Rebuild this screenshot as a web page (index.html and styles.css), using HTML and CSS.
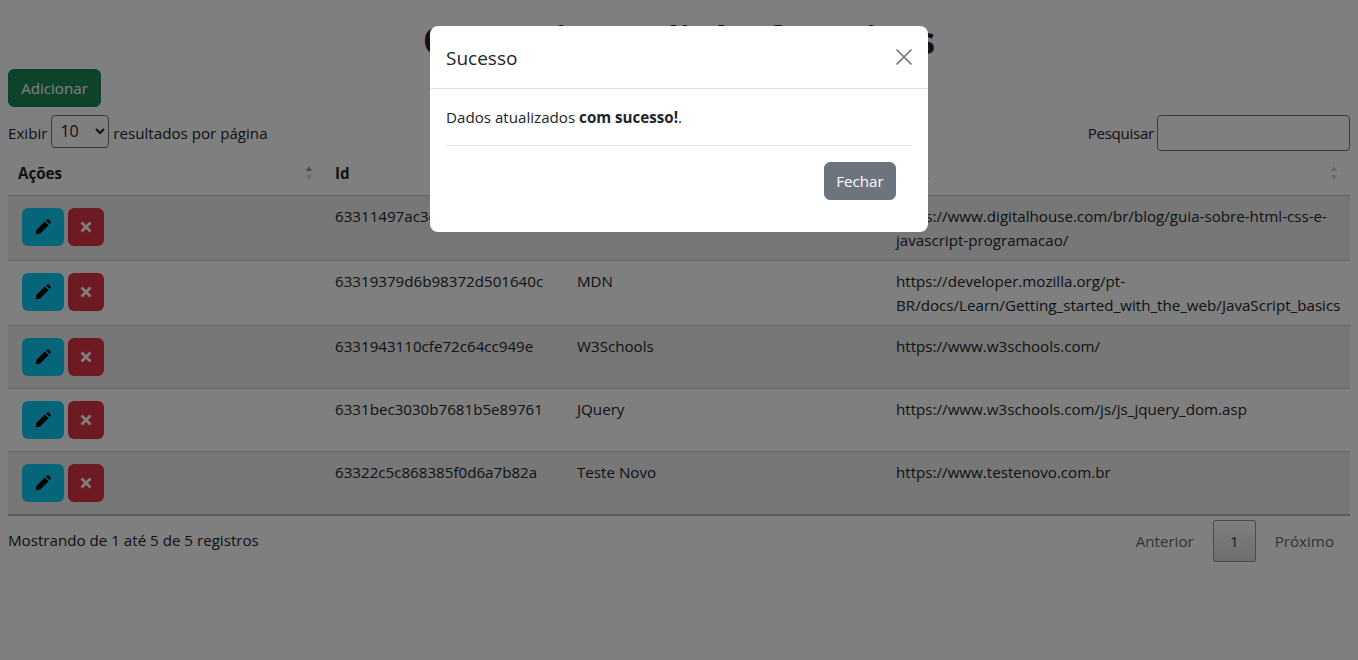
FILE: index.html
```html
<!DOCTYPE html>
<html lang="pt-BR">
<head>
<meta charset="utf-8">
<title>Gerenciar os links favoritos</title>
<link rel="stylesheet" href="styles.css">
</head>
<body>
<main class="page">
  <h1 class="title">Gerenciar os links favoritos</h1>
  <button class="btn btn-add" type="button">Adicionar</button>
  <div class="controls">
    <label class="length">Exibir <select class="select"><option>10</option></select> resultados por página</label>
    <label class="search"><span class="search-label">Pesquisar</span><input class="search-input" type="text"></label>
  </div>
  <table class="table">
    <colgroup><col class="c1"><col class="c2"><col class="c3"><col class="c4"></colgroup>
    <thead>
      <tr>
        <th><span class="th-in">Ações<span class="sort"><i class="up dark"></i><i class="down"></i></span></span></th>
        <th><span class="th-in">Id<span class="sort"><i class="up"></i><i class="down"></i></span></span></th>
        <th><span class="th-in">Título<span class="sort"><i class="up"></i><i class="down"></i></span></span></th>
        <th><span class="th-in">Link<span class="sort"><i class="up"></i><i class="down"></i></span></span></th>
      </tr>
    </thead>
    <tbody>
      <tr class="odd">
        <td class="actions"><button class="icon-btn edit" type="button"><svg viewBox="0 0 16 16" width="16" height="16"><path d="M.7 15.3l.8-4.5 8.3-8.3 3.7 3.7-8.3 8.3z"/><path d="M10.9 1.5l.8-.8c.7-.7 1.7-.7 2.4 0l1.2 1.2c.7.7.7 1.7 0 2.4l-.8.8z"/></svg></button><button class="icon-btn del" type="button"><svg viewBox="0 0 16 16" width="16" height="16"><path d="M3.5 3.5l9 9M12.5 3.5l-9 9" stroke="currentColor" stroke-width="2.8" fill="none"/></svg></button></td>
        <td>63311497ac3e0bd5a1f47c2d</td><td>Digital House</td><td class="link">https://www.digitalhouse.com/br/blog/guia-sobre-html-css-e-javascript-programacao/</td>
      </tr>
      <tr>
        <td class="actions"><button class="icon-btn edit" type="button"><svg viewBox="0 0 16 16" width="16" height="16"><path d="M.7 15.3l.8-4.5 8.3-8.3 3.7 3.7-8.3 8.3z"/><path d="M10.9 1.5l.8-.8c.7-.7 1.7-.7 2.4 0l1.2 1.2c.7.7.7 1.7 0 2.4l-.8.8z"/></svg></button><button class="icon-btn del" type="button"><svg viewBox="0 0 16 16" width="16" height="16"><path d="M3.5 3.5l9 9M12.5 3.5l-9 9" stroke="currentColor" stroke-width="2.8" fill="none"/></svg></button></td>
        <td>63319379d6b98372d501640c</td><td>MDN</td><td class="link">https://developer.mozilla.org/pt-BR/docs/Learn/Getting_started_with_the_web/JavaScript_basics</td>
      </tr>
      <tr class="odd">
        <td class="actions"><button class="icon-btn edit" type="button"><svg viewBox="0 0 16 16" width="16" height="16"><path d="M.7 15.3l.8-4.5 8.3-8.3 3.7 3.7-8.3 8.3z"/><path d="M10.9 1.5l.8-.8c.7-.7 1.7-.7 2.4 0l1.2 1.2c.7.7.7 1.7 0 2.4l-.8.8z"/></svg></button><button class="icon-btn del" type="button"><svg viewBox="0 0 16 16" width="16" height="16"><path d="M3.5 3.5l9 9M12.5 3.5l-9 9" stroke="currentColor" stroke-width="2.8" fill="none"/></svg></button></td>
        <td>6331943110cfe72c64cc949e</td><td>W3Schools</td><td class="link">https://www.w3schools.com/</td>
      </tr>
      <tr>
        <td class="actions"><button class="icon-btn edit" type="button"><svg viewBox="0 0 16 16" width="16" height="16"><path d="M.7 15.3l.8-4.5 8.3-8.3 3.7 3.7-8.3 8.3z"/><path d="M10.9 1.5l.8-.8c.7-.7 1.7-.7 2.4 0l1.2 1.2c.7.7.7 1.7 0 2.4l-.8.8z"/></svg></button><button class="icon-btn del" type="button"><svg viewBox="0 0 16 16" width="16" height="16"><path d="M3.5 3.5l9 9M12.5 3.5l-9 9" stroke="currentColor" stroke-width="2.8" fill="none"/></svg></button></td>
        <td>6331bec3030b7681b5e89761</td><td>JQuery</td><td class="link">https://www.w3schools.com/js/js_jquery_dom.asp</td>
      </tr>
      <tr class="odd last">
        <td class="actions"><button class="icon-btn edit" type="button"><svg viewBox="0 0 16 16" width="16" height="16"><path d="M.7 15.3l.8-4.5 8.3-8.3 3.7 3.7-8.3 8.3z"/><path d="M10.9 1.5l.8-.8c.7-.7 1.7-.7 2.4 0l1.2 1.2c.7.7.7 1.7 0 2.4l-.8.8z"/></svg></button><button class="icon-btn del" type="button"><svg viewBox="0 0 16 16" width="16" height="16"><path d="M3.5 3.5l9 9M12.5 3.5l-9 9" stroke="currentColor" stroke-width="2.8" fill="none"/></svg></button></td>
        <td>63322c5c868385f0d6a7b82a</td><td>Teste Novo</td><td class="link">https://www.testenovo.com.br</td>
      </tr>
    </tbody>
  </table>
  <div class="footer">
    <div class="info">Mostrando de 1 até 5 de 5 registros</div>
    <div class="pager"><a class="page-link">Anterior</a><a class="page-link current">1</a><a class="page-link next">Próximo</a></div>
  </div>
</main>
<div class="backdrop"></div>
<section class="modal" role="dialog">
  <header class="modal-header">
    <h5 class="modal-title">Sucesso</h5>
    <button class="close" type="button" aria-label="Close"><svg viewBox="0 0 16 16" width="16" height="16"><path d="M.5.5l15 15M15.5.5l-15 15" stroke="currentColor" stroke-width="1.6" fill="none"/></svg></button>
  </header>
  <div class="modal-body">
    <p class="msg">Dados atualizados <strong>com sucesso!</strong>.</p>
    <hr class="rule">
    <div class="modal-actions"><button class="btn btn-close" type="button">Fechar</button></div>
  </div>
</section>
</body>
</html>
```
FILE: styles.css
```css
* { box-sizing: border-box; }
html, body { height: 100%; }
body {
  margin: 0;
  padding: 0 8px;
  background: #fff;
  color: #212529;
  font-family: "Open Sans", "Noto Sans", "Liberation Sans", sans-serif;
  font-size: 15.15px;
  line-height: 24px;
  overflow: hidden;
}
.title {
  margin: 0;
  padding-top: 16px;
  height: 69px;
  text-align: center;
  font-size: 37.5px;
  line-height: 48px;
  font-weight: 700;
  white-space: nowrap;
}
.btn {
  border: 1px solid transparent;
  border-radius: 6px;
  font: inherit;
  padding: 6px 12px;
  height: 38px;
  color: #fff;
}
.btn-add { display: block; background: #198754; border-color: #198754; width: 93px; padding: 6px 0; }
.controls {
  display: flex;
  justify-content: space-between;
  align-items: center;
  margin-top: 7px;
  height: 38px;
}
.length, .search { display: flex; align-items: center; white-space: pre; }
.select {
  width: 58px;
  height: 33px;
  margin-bottom: 4px;
  padding: 0 4px;
  font: inherit;
  font-size: 16px;
  color: #212529;
  background: #fff;
  border: 1px solid #767676;
  border-radius: 4px;
}
.search-label { letter-spacing: -.3px; margin-right: 3px; }
.search-input {
  width: 193px;
  height: 36px;
  border: 1px solid #767676;
  border-radius: 4px;
  background: #fff;
}
.table {
  width: 1342px;
  table-layout: fixed;
  border-collapse: collapse;
  margin-top: 3px;
}
.c1 { width: 317px; }
.c2 { width: 242px; }
.c3 { width: 319px; }
.c4 { width: 464px; }
th {
  text-align: left;
  font-weight: 700;
  height: 40px;
  padding: 0 10px 3px;
  border-bottom: 1px solid #c8c8c8;
}
.th-in { display: flex; justify-content: space-between; align-items: center; }
.sort { display: flex; flex-direction: column; gap: 4px; margin-right: 3px; }
.up, .down { display: block; width: 0; height: 0; border-left: 3px solid transparent; border-right: 3px solid transparent; }
.up { border-bottom: 5px solid #d5d5d5; }
.up.dark { border-bottom-color: #9a9a9a; }
.down { border-top: 5px solid #d5d5d5; }
td {
  vertical-align: top;
  padding: 8px 10px;
  border-bottom: 1px solid #cccccc;
  overflow-wrap: anywhere;
}
td.link { padding-right: 2px; }
tr.odd td { background: #efefef; }
tr.last td { border-bottom: 2px solid #b4b4b4; }
td.actions { padding: 12px 14px 12px; font-size: 0; }
.icon-btn {
  display: inline-flex;
  align-items: center;
  justify-content: center;
  height: 38px;
  border: 0;
  border-radius: 6px;
  padding: 0;
  vertical-align: top;
}
.edit { width: 42px; background: #0dcaf0; color: #000; margin-right: 4px; }
.del { width: 36px; background: #dc3545; color: #fff; }
.edit svg { fill: #000; }
.footer { display: flex; justify-content: space-between; margin-top: 2px; }
.info { padding-top: 10px; }
.pager { display: flex; align-items: center; padding-top: 2px; }
.page-link { padding: 0 17px; height: 42px; line-height: 41px; border: 1px solid transparent; border-radius: 2px; color: #666; margin-left: 1px; }
.page-link.next { padding-right: 15px; }
.page-link.current {
  width: 43px;
  padding: 0;
  text-align: center;
  color: #333;
  border-color: #979797;
  background: linear-gradient(#fff, #dcdcdc);
}
.backdrop { position: fixed; inset: 0; background: rgba(0,0,0,.5); }
.modal {
  position: fixed;
  top: 26px;
  left: 430px;
  width: 498px;
  height: 206px;
  background: #fff;
  border-radius: 8px;
}
.modal-header {
  display: flex;
  justify-content: space-between;
  align-items: center;
  height: 63px;
  padding: 0 16px;
  border-bottom: 1px solid #dee2e6;
}
.modal-title { margin: 2px 0 0; font-size: 19px; font-weight: 400; line-height: 24px; }
.close { background: none; border: 0; padding: 0; color: #7a7a7a; width: 16px; height: 16px; display: flex; }
.modal-body { padding: 16px 16px 0; }
.msg { margin: 0; }
.msg strong { font-weight: 700; }
.rule { border: 0; border-top: 1px solid #e4e4e4; margin: 16px 0; }
.modal-actions { display: flex; justify-content: flex-end; padding-right: 16px; }
.btn-close { background: #6c757d; border-color: #6c757d; width: 72px; padding: 6px 0; }
```
